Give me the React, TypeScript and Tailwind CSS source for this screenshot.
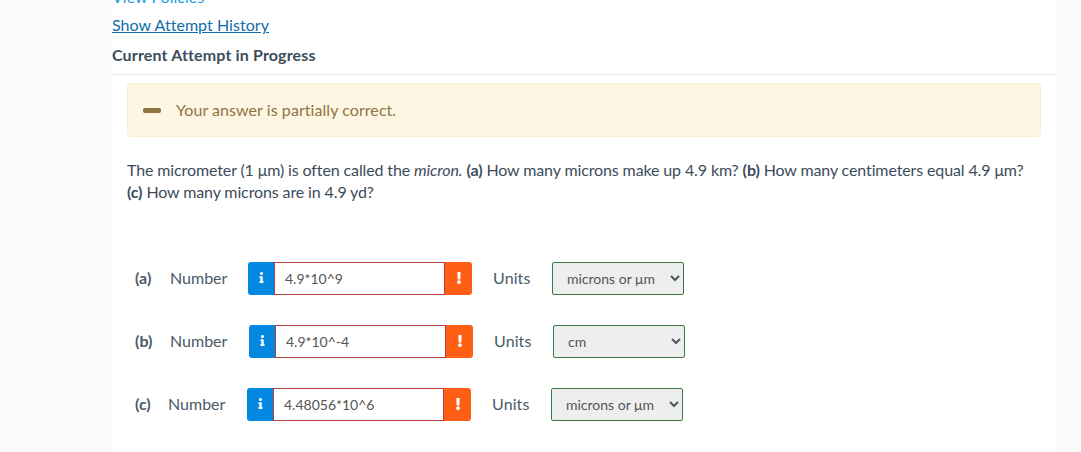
import React from "react";
import { FaInfo, FaExclamation } from "react-icons/fa";

function Row({ part, value, unit, labelW, numW, mt }: { part: string; value: string; unit: string; labelW: string; numW: string; mt: string }) {
  return (
    <div className={`flex items-center h-[33px] ${mt}`}>
      <span className={`font-bold text-[#4a5a6a] pb-[2px] ${labelW}`}>{part}</span>
      <span className={`text-[#4a5a68] pb-[2px] ${numW}`}>Number</span>
      <div className="flex h-[33px] w-[224px] text-[14px]">
        <div className="w-[26px] bg-[#0288e0] rounded-l-[3px] flex items-center justify-center text-white pb-[2px]">
          <FaInfo size={11} />
        </div>
        <div className="w-[171px] border border-[#b5413f] bg-white flex items-center pl-[10px] text-[#555]">{value}</div>
        <div className="w-[27px] bg-[#ff5f15] rounded-r-[3px] flex items-center justify-center text-white pb-[2px]">
          <FaExclamation size={12} />
        </div>
      </div>
      <span className="ml-[21px] w-[59px] pb-[2px] text-[#4a5a68] tracking-[0.1px]">Units</span>
      <select defaultValue={unit} className="w-[132px] h-[33px] border border-[#3b7a3e] rounded-[2px] bg-[#eeeeee] text-[14px] text-[#555] pl-[10px]">
        <option>{unit}</option>
      </select>
    </div>
  );
}

export default function App() {
  return (
    <div className="h-[452px] overflow-hidden bg-[#fafafa] text-[16px] text-[#3d4c5c]" style={{ fontFamily: "Lato, sans-serif" }}>
      <div className="ml-[112px] w-[944px] h-[452px] bg-white overflow-hidden">
        <div className="-mt-[13px] h-[26px] leading-[20px] text-[#1e9be0]">View Policies</div>
        <div className="h-[29px] pt-[2px] leading-[20px] tracking-[0.05px]">
          <a className="text-[#0d6ea8] underline">Show Attempt History</a>
        </div>
        <div className="h-[32px] pt-[3px] leading-[20px] font-bold tracking-[0.15px] text-[#3d4c5c]">Current Attempt in Progress</div>
        <div className="h-px bg-[#e8e8e8] mb-[8px]" />
        <div className="mx-[15px] h-[54px] rounded-[4px] border border-[#fbeccb] bg-[#fdf6e3] flex items-center text-[#8f7442]">
          <span className="ml-[15px] w-[18px] h-[5px] rounded-[2px] bg-[#8f7442]" />
          <span className="ml-[15px] pb-[1px] tracking-[0.06px]">Your answer is partially correct.</span>
        </div>
        <p className="mt-[22px] ml-[15px] w-[914px] leading-[22px] text-[#3d4c5c] tracking-[-0.12px]">
          The micrometer (1 μm) is often called the <i>micron.</i> <b>(a)</b> How many microns make up 4.9 km? <b>(b)</b> How many centimeters equal 4.9 μm?<br /><b>(c)</b> How many microns are in 4.9 yd?
        </p>
        <div className="ml-[23px]">
          <Row part="(a)" value="4.9*10^9" unit="microns or μm" labelW="w-[35px]" numW="w-[78px]" mt="mt-[59px]" />
          <Row part="(b)" value="4.9*10^-4" unit="cm" labelW="w-[35px]" numW="w-[79px]" mt="mt-[30px]" />
          <Row part="(c)" value="4.48056*10^6" unit="microns or μm" labelW="w-[33px]" numW="w-[79px]" mt="mt-[30px]" />
        </div>
      </div>
    </div>
  );
}
